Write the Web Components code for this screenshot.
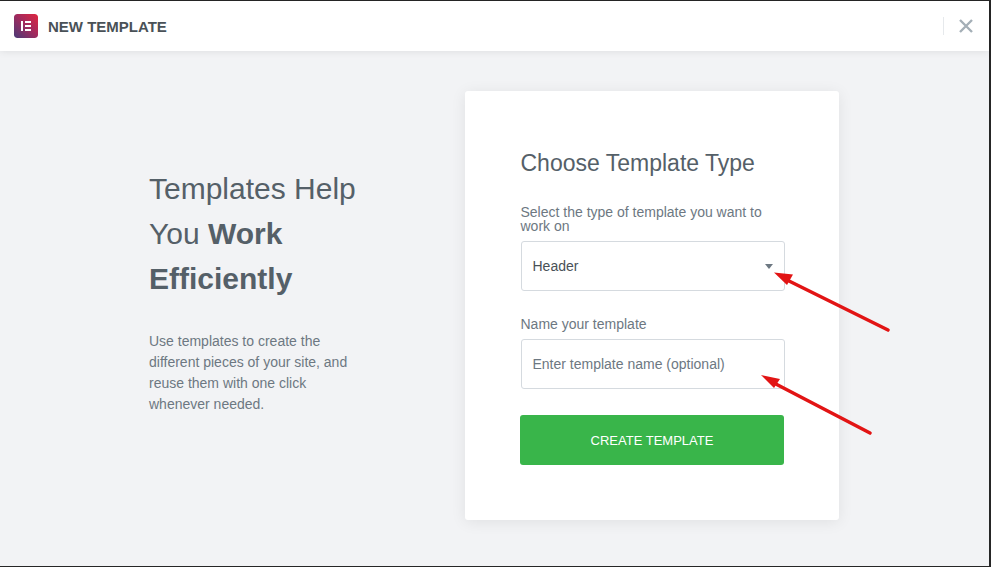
<!DOCTYPE html>
<html>
<head>
<meta charset="utf-8">
<title>New Template</title>
<style>
html, body { margin: 0; height: 100%; }
body { font-family: "Liberation Sans", Arial, sans-serif; overflow: hidden; }
</style>
</head>
<body>
<template-dialog>
    <dialog-header slot="header">NEW TEMPLATE</dialog-header>
    <intro-text slot="intro">
        <span slot="title">Templates Help You <b>Work Efficiently</b></span>
        Use templates to create the different pieces of your site, and reuse them with one click whenever needed.
    </intro-text>
    <template-form slot="form"></template-form>
</template-dialog>
<script>
window.customElements.define('template-dialog', class extends HTMLElement{
    constructor(){
        super();
        this.attachShadow({ mode: 'open' });
        this.shadowRoot.innerHTML = `
        <style>
            :host{
                display: flex;
                flex-direction: column;
                position: relative;
                box-sizing: border-box;
                width: 991px;
                height: 567px;
                background: #f2f3f5;
                border-top: 1px solid #262626;
                border-right: 2px solid #262626;
                border-bottom: 1px solid #262626;
            }
            .body{
                flex: 1;
                display: flex;
                padding: 40px 0 0 149px;
            }
            .left{ width: 316px; padding-top: 75px; box-sizing: border-box; }
            .arrows{ position: absolute; left: 0; top: -1px; pointer-events: none; }
        </style>
        <slot name="header"></slot>
        <div class="body">
            <div class="left"><slot name="intro"></slot></div>
            <slot name="form"></slot>
        </div>
        <svg class="arrows" width="991" height="567" viewBox="0 0 991 567">
            <g fill="#e21414" stroke="#e21414">
                <line x1="888" y1="330" x2="785" y2="279" stroke-width="3.6" stroke-linecap="round"/>
                <polygon points="774,272.5 793,274.5 787,285" stroke="none"/>
                <line x1="870" y1="433" x2="772" y2="382" stroke-width="3.6" stroke-linecap="round"/>
                <polygon points="761,375 780,379 774,388" stroke="none"/>
            </g>
        </svg>`;
    }
});

window.customElements.define('dialog-header', class extends HTMLElement{
    constructor(){
        super();
        this.attachShadow({ mode: 'open' });
        this.shadowRoot.innerHTML = `
        <style>
            :host{
                display: flex;
                align-items: center;
                flex: none;
                height: 50px;
                padding-left: 14px;
                background: #fff;
                box-shadow: 0 0 8px rgba(0,0,0,.1);
                position: relative;
                color: #495157;
                font-size: 15px;
                font-weight: 700;
            }
            .logo{ width: 24px; height: 24px; margin-right: 10px; border-radius: 3px; display: block; }
            .close{
                margin-left: auto;
                width: 45px;
                height: 18px;
                border-left: 1px solid #e6e9ec;
                display: flex;
                align-items: center;
                justify-content: center;
            }
            .close svg{ margin-right: 1px; }
        </style>
        <svg class="logo" viewBox="0 0 24 24">
            <defs>
                <linearGradient id="logo-grad" x1="0" y1="1" x2="1" y2="0">
                    <stop offset="0" stop-color="#4a3a78"/>
                    <stop offset=".55" stop-color="#a52a5c"/>
                    <stop offset="1" stop-color="#e0263f"/>
                </linearGradient>
            </defs>
            <rect width="24" height="24" rx="3" fill="url(#logo-grad)"/>
            <rect x="7" y="7" width="2" height="10" fill="#fff"/>
            <rect x="11" y="7" width="6" height="2" fill="#fff"/>
            <rect x="11" y="11" width="6" height="2" fill="#fff"/>
            <rect x="11" y="15" width="6" height="2" fill="#fff"/>
        </svg>
        <slot></slot>
        <div class="close">
            <svg width="14" height="14" viewBox="0 0 14 14">
                <path d="M1 1L13 13M13 1L1 13" stroke="#a4afb7" stroke-width="2.4" fill="none"/>
            </svg>
        </div>`;
    }
});

window.customElements.define('intro-text', class extends HTMLElement{
    constructor(){
        super();
        this.attachShadow({ mode: 'open' });
        this.shadowRoot.innerHTML = `
        <style>
            :host{ display: block; width: 220px; color: #6d7882; font-size: 14px; line-height: 21px; }
            .title{
                color: #556068;
                font-size: 30px;
                line-height: 45px;
                margin-bottom: 30px;
            }
        </style>
        <div class="title"><slot name="title"></slot></div>
        <slot></slot>`;
    }
});

window.customElements.define('template-form', class extends HTMLElement{
    constructor(){
        super();
        this.attachShadow({ mode: 'open' });
        this.shadowRoot.innerHTML = `
        <style>
            :host{
                display: block;
                box-sizing: border-box;
                width: 374px;
                height: 429px;
                padding: 58px 55px 0 56px;
                background: #fff;
                border-radius: 3px;
                box-shadow: 0 2px 15px rgba(0,0,0,.08);
                color: #6d7882;
                font-size: 14px;
            }
            h2{
                margin: 0 0 28px -0.5px;
                color: #556068;
                font-size: 23px;
                font-weight: 400;
                line-height: 28px;
            }
            label{ display: block; line-height: 14px; margin: 0 0 8px -0.5px; }
            .field{
                box-sizing: border-box;
                width: 264px;
                height: 50px;
                display: flex;
                align-items: center;
                justify-content: space-between;
                padding: 0 11px;
                border: 1px solid #d5dadf;
                border-radius: 3px;
                background: #fff;
            }
            .value{ color: #495157; margin-left: -0.5px; }
            .placeholder{ color: #6d7882; margin-left: -0.5px; }
            .caret{ width: 0; height: 0; border-style: solid; border-color: #6d7882 transparent transparent; border-width: 5px 4.5px 0; }
            .gap{ height: 26px; }
            .gap2{ height: 26px; }
            .btn{
                box-sizing: border-box;
                width: 264px;
                height: 50px;
                margin-left: -1px;
                display: flex;
                align-items: center;
                justify-content: center;
                background: #39b54a;
                color: #fff;
                border-radius: 3px;
                font-size: 13px;
            }
        </style>
        <h2>Choose Template Type</h2>
        <label>Select the type of template you want to work on</label>
        <div class="field"><span class="value">Header</span><span class="caret"></span></div>
        <div class="gap"></div>
        <label>Name your template</label>
        <div class="field"><span class="placeholder">Enter template name (optional)</span></div>
        <div class="gap2"></div>
        <div class="btn">CREATE TEMPLATE</div>`;
    }
});
</script>
</body>
</html>
